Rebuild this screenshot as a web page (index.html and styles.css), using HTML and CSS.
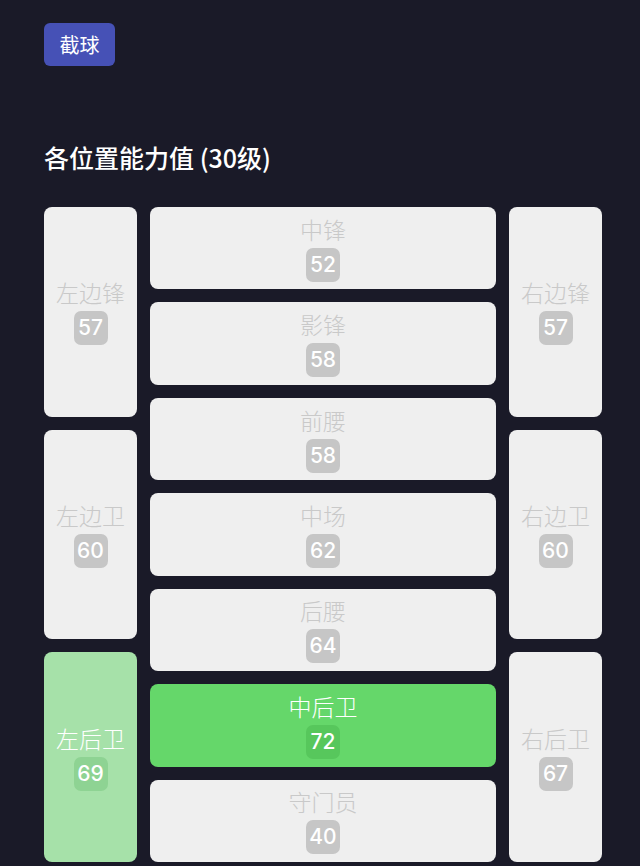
FILE: index.html
```html
<!DOCTYPE html>
<html lang="zh-CN">
<head>
    <meta charset="UTF-8">
    <meta name="viewport" content="width=device-width, initial-scale=1.0">
    <title>各位置能力值</title>
    <link rel="stylesheet" href="styles.css">
</head>
<body>
    <div class="page">
        <div class="tags">
            <span class="tag">截球</span>
        </div>
        <h2 class="title">各位置能力值 (30级)</h2>

        <div class="field">
            <div class="side">
                <div class="pos"><span class="name">左边锋</span><span class="score">57</span></div>
                <div class="pos"><span class="name">左边卫</span><span class="score">60</span></div>
                <div class="pos good"><span class="name">左后卫</span><span class="score">69</span></div>
            </div>
            <div class="center">
                <div class="pos"><span class="name">中锋</span><span class="score">52</span></div>
                <div class="pos"><span class="name">影锋</span><span class="score">58</span></div>
                <div class="pos"><span class="name">前腰</span><span class="score">58</span></div>
                <div class="pos"><span class="name">中场</span><span class="score">62</span></div>
                <div class="pos"><span class="name">后腰</span><span class="score">64</span></div>
                <div class="pos best"><span class="name">中后卫</span><span class="score">72</span></div>
                <div class="pos"><span class="name">守门员</span><span class="score">40</span></div>
            </div>
            <div class="side">
                <div class="pos"><span class="name">右边锋</span><span class="score">57</span></div>
                <div class="pos"><span class="name">右边卫</span><span class="score">60</span></div>
                <div class="pos"><span class="name">右后卫</span><span class="score">67</span></div>
            </div>
        </div>
    </div>
</body>
</html>
```

FILE: styles.css
```css
body {
    margin: 0;
    background-color: #1a1a28;
    font-family: "Noto Sans CJK SC", "Noto Sans", sans-serif;
    color: #fff;
}
.page {
    padding: 23px 38px 0 44px;
}
.tags {
    display: flex;
}
.tag {
    display: inline-block;
    width: 71px;
    height: 43px;
    line-height: 43px;
    text-align: center;
    font-size: 20px;
    background: #4651b6;
    border-radius: 6px;
}
.title {
    margin: 74px 0 0 0;
    font-size: 25px;
    line-height: 34px;
    font-weight: 500;
}
.field {
    display: grid;
    grid-template-columns: 93px 346px 93px;
    gap: 13px;
    height: 655px;
    margin-top: 33px;
}
.side, .center {
    display: flex;
    flex-direction: column;
    gap: 13px;
}
.pos {
    flex: 1;
    display: flex;
    flex-direction: column;
    align-items: center;
    justify-content: center;
    gap: 5px;
    padding-top: 1px;
    background: #efefef;
    border-radius: 8px;
}
.name {
    font-size: 23px;
    line-height: 27px;
    font-weight: 300;
    color: #c9c9c9;
}
.score {
    width: 34px;
    height: 34px;
    line-height: 34px;
    text-align: center;
    font-family: Inter, "Noto Sans", sans-serif;
    font-size: 21px;
    font-weight: 500;
    color: #fff;
    background: #c6c6c6;
    border-radius: 7px;
}
.best {
    background: #65d76a;
}
.best .name {
    color: #fff;
}
.best .score {
    background: #57c75c;
}
.good {
    background: #a6e1a9;
}
.good .name {
    color: #fff;
}
.good .score {
    background: #8ed393;
}
```
